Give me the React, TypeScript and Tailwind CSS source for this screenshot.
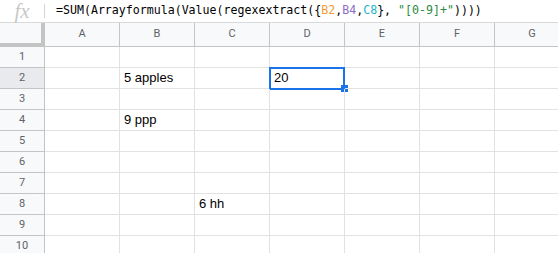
import React from "react";

const cols = ["A", "B", "C", "D", "E", "F", "G"];
const rows = [1, 2, 3, 4, 5, 6, 7, 8, 9, 10];

const data: Record<string, string> = {
  B2: "5 apples",
  D2: "20",
  B4: "9 ppp",
  C8: "6 hh",
};

export default function App() {
  return (
    <div className="w-[558px] h-[253px] overflow-hidden bg-white" style={{ fontFamily: "Roboto, 'Liberation Sans', sans-serif" }}>
      {/* Formula bar */}
      <div className="h-[23px] flex items-center border-b border-[#d9d9d9] bg-white">
        <div className="w-[44px] h-full flex items-center justify-center pl-[2px]">
          <span className="italic text-[21px] leading-[22px] pr-[2px] text-[#c8c8c8]" style={{ fontFamily: "'Liberation Serif', serif" }}>fx</span>
        </div>
        <div className="w-px h-[14px] bg-[#d4d4d4]"></div>
        <div className="pl-[11px] text-[11.6px] text-black whitespace-nowrap leading-none" style={{ fontFamily: "'DejaVu Sans Mono', monospace" }}>
          =SUM(Arrayformula(Value(regexextract({"{"}
          <span className="text-[#f09b35]">B2</span>,
          <span className="text-[#8e6dc8]">B4</span>,
          <span className="text-[#22b4c8]">C8</span>
          {"}"}, <span className="text-[#2a8a3e]">"[0-9]+"</span>))))
        </div>
      </div>
      {/* Grid */}
      <div className="grid grid-cols-[45px_repeat(7,75px)]">
        {/* header row */}
        <div className="h-[24px] bg-[#f8f9fa] border-r-[4px] border-b-[4px] border-[#c4c4c4]"></div>
        {cols.map((c) => (
          <div
            key={c}
            className="h-[24px] bg-[#f8f9fa] border-r border-b border-[#c4c4c4] flex items-center justify-center text-[11px] text-[#5f6368]"
          >
            {c}
          </div>
        ))}
        {rows.map((r) => (
          <React.Fragment key={r}>
            <div
              className={`h-[21px] border-r border-b border-[#c4c4c4] flex items-center justify-center text-[11px] text-[#5f6368] ${
                r === 2 ? "bg-[#e8eaed]" : "bg-[#f8f9fa]"
              }`}
            >
              {r}
            </div>
            {cols.map((c) => {
              const key = `${c}${r}`;
              const v = data[key];
              const sel = key === "D2";
              return (
                <div
                  key={key}
                  className="relative h-[21px] border-r border-b border-[#e2e2e2] flex items-center pl-[4px] text-[13px] text-black whitespace-nowrap"
                  style={{ fontFamily: "'Liberation Sans', Arial, sans-serif" }}
                >
                  {v}
                  {sel && (
                    <>
                      <div className="absolute -left-[1px] -top-[1px] w-[76px] h-[23px] border-2 border-[#1a73e8]"></div>
                      <div className="absolute -right-[4px] -bottom-[4px] w-[7px] h-[7px] bg-[#1a73e8]"></div>
                    </>
                  )}
                </div>
              );
            })}
          </React.Fragment>
        ))}
      </div>
    </div>
  );
}
